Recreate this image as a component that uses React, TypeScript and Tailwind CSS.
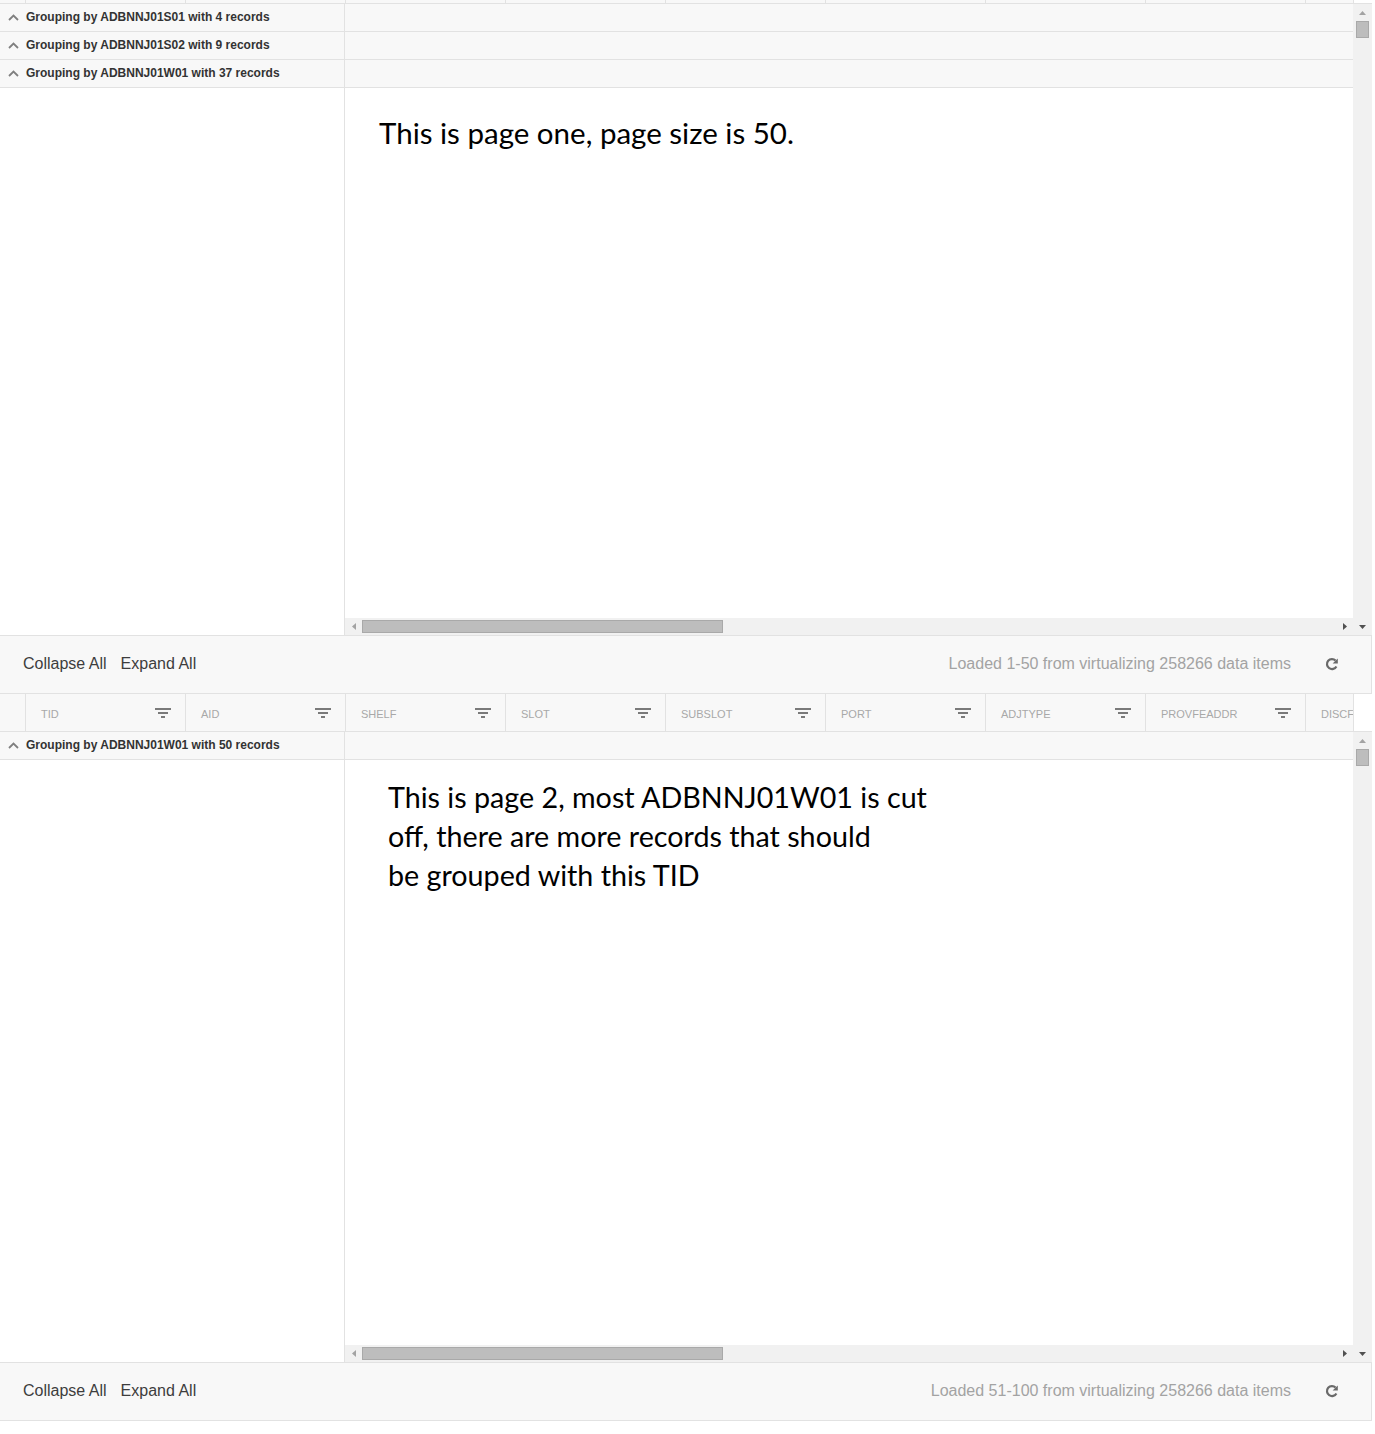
import type { ReactNode } from 'react';

const columns = ['TID', 'AID', 'SHELF', 'SLOT', 'SUBSLOT', 'PORT', 'ADJTYPE', 'PROVFEADDR'];

function FilterIcon() {
  return (
    <svg width="16" height="10" viewBox="0 0 16 10" className="shrink-0">
      <rect x="0" y="0" width="16" height="2" fill="#7a7a7a" />
      <rect x="3" y="4" width="10" height="2" fill="#7a7a7a" />
      <rect x="6" y="8" width="4" height="2" fill="#7a7a7a" />
    </svg>
  );
}

function ChevronUp() {
  return (
    <svg width="11" height="7" viewBox="0 0 11 7" className="shrink-0">
      <polyline points="1,6 5.5,1.5 10,6" fill="none" stroke="#808080" strokeWidth="1.8" />
    </svg>
  );
}

function ReloadIcon() {
  return (
    <svg width="16" height="16" viewBox="0 0 16 16">
      <path
        d="M11.6 4.6 A5 5 0 1 0 12.4 10.4"
        fill="none"
        stroke="#6a6a6a"
        strokeWidth="2.2"
      />
      <polygon points="13.8,2.4 13.8,7.6 8.6,7.6" fill="#6a6a6a" />
    </svg>
  );
}

// tiny scrollbar arrow; dir picks which way the triangle points
function Arrow({ dir, dark }: { dir: 'up' | 'down' | 'left' | 'right'; dark?: boolean }) {
  const points = {
    up: '0,4 3.5,0 7,4',
    down: '0,0 3.5,4 7,0',
    left: '4,0 0,3.5 4,7',
    right: '0,0 4,3.5 0,7',
  }[dir];
  const vertical = dir === 'up' || dir === 'down';
  return (
    <svg
      width={vertical ? 7 : 4}
      height={vertical ? 4 : 7}
      viewBox={vertical ? '0 0 7 4' : '0 0 4 7'}
    >
      <polygon points={points} fill={dark ? '#505050' : '#a3a3a3'} />
    </svg>
  );
}

// the top grid is scrolled so only the bottom edge of its header shows,
// so labels are skipped there
function HeaderRow({ labels = true }: { labels?: boolean }) {
  return (
    <div className="flex h-[38px] shrink-0 border-b border-[#e2e2e2]">
      <div className="w-[25px] shrink-0 bg-[#f8f8f8]" />
      {columns.map((col) => (
        <div
          key={col}
          className="flex w-[160px] shrink-0 items-center justify-between border-l border-[#e2e2e2] bg-[#f8f8f8] pl-[15px] pr-[14px]"
        >
          {labels && <span className="pt-[3px] text-[11px] text-[#a8a8a8]">{col}</span>}
          {labels && <FilterIcon />}
        </div>
      ))}
      <div className="flex w-[49px] shrink-0 items-center overflow-hidden border-x border-[#e2e2e2] bg-[#f8f8f8] pl-[15px]">
        {labels && (
          <span className="whitespace-nowrap pt-[3px] text-[11px] text-[#a8a8a8]">DISCFLAG</span>
        )}
      </div>
      <div className="flex-1 bg-white" />
    </div>
  );
}

interface GridProps {
  clipHeader?: boolean;
  bodyClass: string;
  groups: string[];
  note: ReactNode;
  status: string;
}

function Grid({ clipHeader, bodyClass, groups, note, status }: GridProps) {
  return (
    <div className="w-[1372px]">
      {clipHeader ? (
        <div className="flex h-[4px] flex-col justify-end overflow-hidden">
          <HeaderRow labels={false} />
        </div>
      ) : (
        <HeaderRow />
      )}

      <div className={`flex ${bodyClass}`}>
        {/* locked column with the group captions */}
        <div className="flex w-[345px] shrink-0 flex-col border-r border-[#e2e2e2] bg-white">
          {groups.map((g) => (
            <div
              key={g}
              className="flex h-[28px] shrink-0 items-center gap-[7px] border-b border-[#e2e2e2] bg-[#f8f8f8] pb-[1px] pl-[8px]"
            >
              <ChevronUp />
              <span className="text-[12px] font-bold text-[#333]">{g}</span>
            </div>
          ))}
        </div>

        <div className="flex min-w-0 flex-1 flex-col">
          {groups.map((g) => (
            <div key={g} className="h-[28px] shrink-0 border-b border-[#e2e2e2] bg-[#f8f8f8]" />
          ))}
          <div className="flex-1 bg-white">{note}</div>
          <div className="flex h-[17px] shrink-0 items-center bg-[#f1f1f1]">
            <div className="flex w-[17px] justify-center">
              <Arrow dir="left" />
            </div>
            <div className="h-[13px] w-[361px] border border-[#a9a9a9] bg-[#bdbdbd]" />
            <div className="flex-1" />
            <div className="flex w-[17px] justify-center">
              <Arrow dir="right" dark />
            </div>
          </div>
        </div>

        <div className="flex w-[19px] shrink-0 flex-col bg-[#f1f1f1]">
          <div className="flex h-[17px] items-center justify-center">
            <Arrow dir="up" />
          </div>
          <div className="mx-auto h-[17px] w-[13px] border border-[#a9a9a9] bg-[#bdbdbd]" />
          <div className="flex-1" />
          <div className="flex h-[17px] items-center justify-center">
            <Arrow dir="down" dark />
          </div>
        </div>
      </div>

      <div className="flex h-[59px] items-center border-y border-r border-[#e2e2e2] bg-[#f8f8f8] pb-[1px] pl-[23px] pr-[31px] text-[16px]">
        <div className="flex gap-[14px] text-[#3d3d3d]">
          <span>Collapse All</span>
          <span>Expand All</span>
        </div>
        <span className="ml-auto text-[#a3a3a3]">{status}</span>
        <span className="ml-[33px] flex">
          <ReloadIcon />
        </span>
      </div>
    </div>
  );
}

export default function App() {
  return (
    <div className="min-h-[1434px] bg-white font-['Liberation_Sans',Arial,sans-serif]">
      <Grid
        clipHeader
        bodyClass="h-[631px]"
        groups={[
          'Grouping by ADBNNJ01S01 with 4 records',
          'Grouping by ADBNNJ01S02 with 9 records',
          'Grouping by ADBNNJ01W01 with 37 records',
        ]}
        note={
          <p className="pl-[34px] pt-[28px] font-['Lato',sans-serif] text-[29.5px] leading-[34px] text-black">
            This is page one, page size is 50.
          </p>
        }
        status="Loaded 1-50 from virtualizing 258266 data items"
      />
      <Grid
        bodyClass="h-[630px]"
        groups={['Grouping by ADBNNJ01W01 with 50 records']}
        note={
          <p className="pl-[43px] pt-[18px] font-['Lato',sans-serif] text-[28.7px] leading-[39px] text-black">
            This is page 2, most ADBNNJ01W01 is cut
            <br />
            off, there are more records that should
            <br />
            be grouped with this TID
          </p>
        }
        status="Loaded 51-100 from virtualizing 258266 data items"
      />
    </div>
  );
}
